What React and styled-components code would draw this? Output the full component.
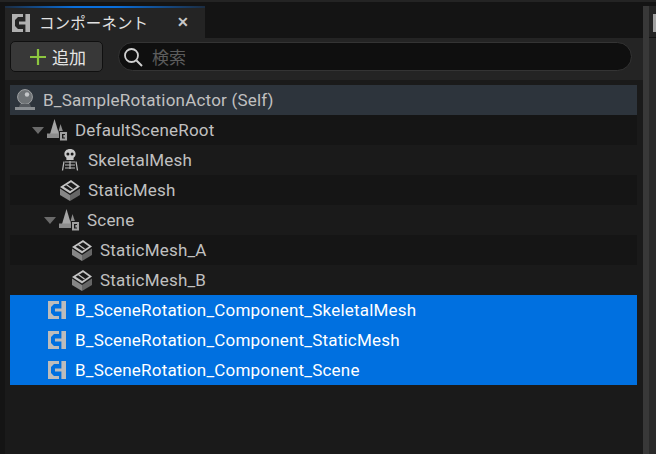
import React from "react";
import styled, { createGlobalStyle } from "styled-components";

const Global = createGlobalStyle`
  html, body { margin: 0; padding: 0; background: #141414; }
  #root { width: 656px; height: 454px; overflow: hidden; }
  * { box-sizing: border-box; }
`;

const Window = styled.div`
  width: 656px;
  height: 454px;
  display: flex;
  background: #141414;
  border-top: 2px solid #242424;
  font-family: Roboto, "Noto Sans CJK JP", sans-serif;
  overflow: hidden;
`;
const Main = styled.div`
  width: 643px;
  flex: none;
  display: flex;
  flex-direction: column;
  padding-left: 5px;
`;
const TabBar = styled.div`
  height: 36px;
  padding-top: 4px;
  display: flex;
`;
const Tab = styled.div`
  width: 200px;
  height: 32px;
  background: #242424;
  border-top: 2px solid;
  border-image: linear-gradient(90deg, #1c2c40 0%, #0a6fdc 35%, #0a6fdc 55%, #1c2c40 100%) 1;
  display: flex;
  align-items: center;
  padding-left: 7px;
  color: #e2e2e2;
  font-size: 15.5px;
`;
const TabTitle = styled.span`
  margin-left: 9px;
  width: 138px;
  letter-spacing: 0.1px;
  position: relative;
  top: -1px;
`;
const Close = styled.span`
  font-size: 14px;
  font-weight: 700;
  color: #c8c8c8;
  line-height: 1;
  position: relative;
  top: -1px;
`;
const Toolbar = styled.div`
  height: 42px;
  background: #242424;
  display: flex;
  align-items: flex-start;
  padding: 3px 11px 0 5px;
  gap: 15px;
`;
const AddButton = styled.div`
  width: 93px;
  height: 31px;
  background: #383838;
  border: 1px solid #101010;
  border-radius: 5px;
  display: flex;
  align-items: center;
  padding-left: 18px;
  gap: 5px;
  color: #e4e4e4;
  font-size: 17px;
`;
const SearchBox = styled.div`
  flex: 1;
  height: 29px;
  margin-top: 1px;
  background: #0f0f0f;
  border: 1px solid #343434;
  border-radius: 15px;
  display: flex;
  align-items: center;
  padding-left: 3px;
  gap: 8px;
  color: #5c5c5c;
  font-size: 17px;
`;
const Panel = styled.div`
  flex: 1;
  background: #1a1a1a;
  padding: 5px 6px 0 5px;
  display: flex;
  flex-direction: column;
`;
const Row = styled.div`
  height: 30px;
  flex: none;
  display: flex;
  align-items: center;
  padding-left: ${(p) => p.$indent}px;
  background: ${(p) => (p.$selected ? "#0070e0" : p.$head ? "#2d343c" : p.$dark ? "#151515" : "#1a1a1a")};
  color: ${(p) => (p.$selected ? "#ffffff" : "#c0c0c0")};
  font-size: 17px;
  letter-spacing: 0.2px;
`;
const Arrow = styled.span`
  width: 0;
  height: 0;
  margin-right: 2px;
  border-left: 6px solid transparent;
  border-right: 6px solid transparent;
  border-top: 7px solid #6a6a6a;
`;
const IconSlot = styled.span`
  width: 22px;
  height: 22px;
  flex: none;
  margin-right: 7px;
  display: flex;
  align-items: center;
  justify-content: center;
`;
const Scrollbar = styled.div`
  width: 6px;
  flex: none;
  background: #383838;
  margin-top: 4px;
`;
const RightStrip = styled.div`
  flex: 1;
  background: #2a2a2a;
  margin-top: 4px;
`;
const RightTab = styled.div`
  height: 32px;
  border-bottom: 1px solid #141414;
  background: #242424;
  padding: 8px 0 0 4px;
`;

const ClassIcon = ({ size = 18, bg = "#b4b4b4", cut = "#2a2a2a" }) => (
  <svg width={size} height={size} viewBox="0 0 18 18">
    <rect width="18" height="18" fill={bg} />
    <path d="M11 3H6L3 6v6l3 3h5v-4.5H7V7.5h4z" fill={cut} />
    <rect x="11" width="2.4" height="7.5" fill={cut} />
    <rect x="11" y="10.5" width="2.4" height="7.5" fill={cut} />
  </svg>
);
const Plus = () => (
  <svg width="18" height="18" viewBox="0 0 18 18">
    <path d="M9 1v16M1 9h16" stroke="#8cc63f" strokeWidth="2.2" />
  </svg>
);
const Magnifier = () => (
  <svg width="22" height="22" viewBox="0 0 22 22" fill="none">
    <circle cx="9.5" cy="9.5" r="6.5" stroke="#d0d0d0" strokeWidth="1.8" />
    <path d="M14.5 14.5L20 20" stroke="#d0d0d0" strokeWidth="2" />
  </svg>
);
const ActorIcon = () => (
  <svg width="22" height="22" viewBox="0 0 22 22">
    <circle cx="11" cy="8" r="7.4" fill="#6f7376" stroke="#a0a2a4" strokeWidth="1" />
    <circle cx="13" cy="5.5" r="2.2" fill="#c4c6c8" />
    <path d="M6 15h10l1 3H5z" fill="#55595e" />
    <path d="M1 18h20v3H1z" fill="#8a8e92" />
  </svg>
);
const SceneIcon = () => (
  <svg width="22" height="22" viewBox="0 0 22 22">
    <path d="M8.5 0L13 15H4z" fill="#a6a6a6" />
    <path d="M14.5 5L17.5 14H12z" fill="#8c8c8c" />
    <path d="M1 14.5h14V19H1z" fill="#8c8c8c" />
    <rect x="13" y="12" width="9" height="10" fill="#1a1a1a" />
    <path d="M14 13h7v8.5h-7zm2 2v4.5h3v-1h-1.6V16H19v-1z" fill="#a0a0a0" fillRule="evenodd" />
  </svg>
);
const SkeletonIcon = () => (
  <svg width="20" height="22" viewBox="0 0 20 22">
    <path d="M10 0c3.6 0 5.6 2.2 5.6 5 0 1.8-.8 3-2 3.8V11H6.400V8.800C5.200 8 4.400 6.800 4.400 5 4.400 2.200 6.400 0 10 0z" fill="#c8c8c8" />
    <circle cx="7.900" cy="5" r="1.500" fill="#1a1a1a" />
    <circle cx="12.100" cy="5" r="1.500" fill="#1a1a1a" />
    <path d="M5 13h10M5 16h10M5 19h10M10 12v8" stroke="#b8b8b8" strokeWidth="1.200" />
    <path d="M4 12.500L2.500 21.500M16 12.500l1.500 9" stroke="#b8b8b8" strokeWidth="1.300" fill="none" />
  </svg>
);
const MeshIcon = () => (
  <svg width="22" height="22" viewBox="0 0 22 22">
    <path d="M1 9.500L11 16v6L1 16z" fill="#868686" />
    <path d="M21 9.500L11 16v6l10-6z" fill="#666666" />
    <path d="M12 1l9 6.500L11 14.500 1 8z" fill="#c4c4c4" />
    <path d="M12 3.200l6 4.300-6.800 4.600-6.600-4.300z" fill="#1a1a1a" />
    <path d="M7.500 5.800l6 4.200" stroke="#c4c4c4" strokeWidth="1.300" />
  </svg>
);

const rows = [
  { label: "DefaultSceneRoot", indent: 22, arrow: true, Icon: SceneIcon, dark: true },
  { label: "SkeletalMesh", indent: 49, Icon: SkeletonIcon, dark: false },
  { label: "StaticMesh", indent: 49, Icon: MeshIcon, dark: true },
  { label: "Scene", indent: 34, arrow: true, Icon: SceneIcon, dark: false },
  { label: "StaticMesh_A", indent: 61, Icon: MeshIcon, dark: true },
  { label: "StaticMesh_B", indent: 61, Icon: MeshIcon, dark: false },
];
const selected = [
  "B_SceneRotation_Component_SkeletalMesh",
  "B_SceneRotation_Component_StaticMesh",
  "B_SceneRotation_Component_Scene",
];

export default function App() {
  return (
    <Window>
      <Global />
      <Main>
        <TabBar>
          <Tab>
            <ClassIcon bg="#b0b0b0" cut="#242424" />
            <TabTitle>コンポーネント</TabTitle>
            <Close>✕</Close>
          </Tab>
        </TabBar>
        <Toolbar>
          <AddButton>
            <Plus />
            <span>追加</span>
          </AddButton>
          <SearchBox>
            <Magnifier />
            <span>検索</span>
          </SearchBox>
        </Toolbar>
        <Panel>
          <Row $head $indent={4}>
            <IconSlot><ActorIcon /></IconSlot>
            B_SampleRotationActor (Self)
          </Row>
          {rows.map(({ label, indent, arrow, Icon, dark }) => (
            <Row key={label} $indent={indent} $dark={dark}>
              {arrow && <Arrow />}
              <IconSlot><Icon /></IconSlot>
              {label}
            </Row>
          ))}
          {selected.map((label) => (
            <Row key={label} $selected $indent={36}>
              <IconSlot><ClassIcon bg="#bcbcbc" cut="#0070e0" /></IconSlot>
              {label}
            </Row>
          ))}
        </Panel>
      </Main>
      <Scrollbar />
      <RightStrip>
        <RightTab>
          <ClassIcon bg="#a0a0a0" cut="#242424" />
        </RightTab>
      </RightStrip>
    </Window>
  );
}
